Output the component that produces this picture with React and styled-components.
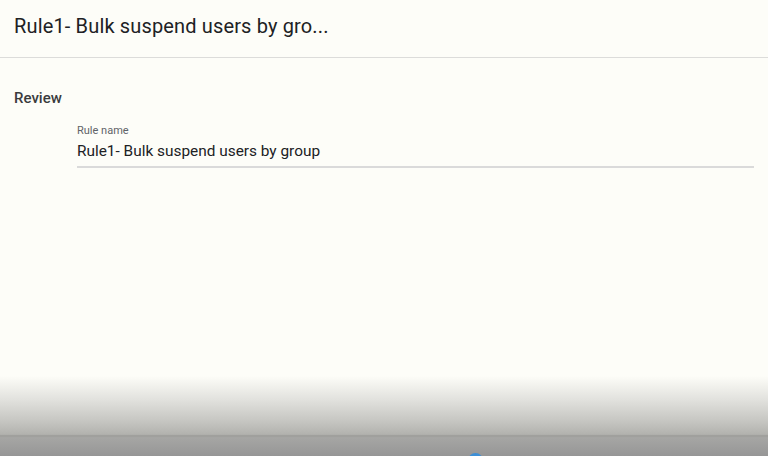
import React from 'react'
import styled, { createGlobalStyle } from 'styled-components'

const GlobalStyle = createGlobalStyle`
  html, body {
    margin: 0;
    padding: 0;
    background: #fdfdf8;
  }
  body {
    font-family: Roboto, 'Liberation Sans', Arial, sans-serif;
    color: #202124;
  }
`

const Page = styled.div`
  position: relative;
  width: 768px;
  height: 456px;
  overflow: hidden;
  display: flex;
  flex-direction: column;
  background: #fdfdf8;
`

const Header = styled.header`
  height: 57px;
  display: flex;
  align-items: center;
  padding: 0 14px;
  border-bottom: 1px solid #dcdcda;
`

const Title = styled.h1`
  margin: 0;
  font-size: 20px;
  font-weight: 400;
  letter-spacing: 0.15px;
  color: #202124;
  padding-bottom: 6px;
`

const Section = styled.section`
  padding: 31px 14px 0;
`

const SectionTitle = styled.h2`
  margin: 0;
  font-size: 15px;
  font-weight: 500;
  color: #3a3b3d;
`

const Field = styled.div`
  margin: 17px 0 0 63px;
  width: 677px;
  border-bottom: 2px solid #dadada;
  padding-bottom: 5px;
`

const Label = styled.div`
  font-size: 11px;
  color: #5f6368;
  line-height: 14px;
`

const Value = styled.div`
  margin-top: 3px;
  font-size: 15.4px;
  line-height: 20px;
  color: #202124;
`

const Scrim = styled.div`
  position: absolute;
  left: 0;
  right: 0;
  bottom: 0;
  height: 80px;
  background: linear-gradient(
    to bottom,
    rgba(253, 253, 248, 0) 0%,
    rgba(225, 225, 221, 1) 30%,
    rgba(196, 196, 192, 1) 58%,
    rgba(178, 178, 174, 1) 73%,
    rgba(160, 160, 157, 1) 74%,
    rgba(160, 160, 157, 1) 76%,
    rgba(166, 166, 164, 1) 77%,
    rgba(150, 150, 150, 1) 100%
  );
`

const Dot = styled.div`
  position: absolute;
  left: 468px;
  top: 453px;
  width: 15px;
  height: 15px;
  border-radius: 50%;
  background: #3d8fd6;
`

export default function App () {
  return (
    <Page>
      <GlobalStyle />
      <Header>
        <Title>Rule1- Bulk suspend users by gro...</Title>
      </Header>
      <Section>
        <SectionTitle>Review</SectionTitle>
        <Field>
          <Label>Rule name</Label>
          <Value>Rule1- Bulk suspend users by group</Value>
        </Field>
      </Section>
      <Scrim />
      <Dot />
    </Page>
  )
}
